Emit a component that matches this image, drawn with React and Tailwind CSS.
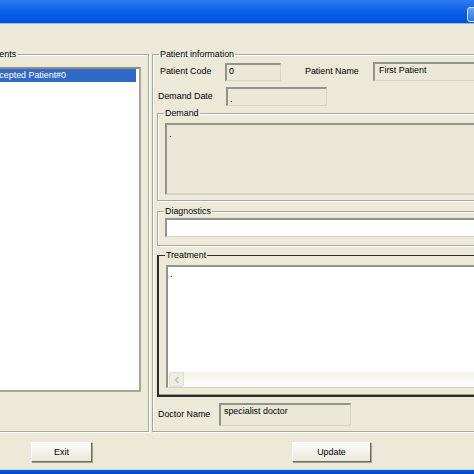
import React from "react";

const sunken = "border-t-2 border-l-2 border-b border-r border-t-[#94938a] border-l-[#94938a] border-b-[#d6d3c2] border-r-[#d6d3c2]";
const etched = "border border-[#aca899] shadow-[inset_1px_1px_0_#ffffff,1px_1px_0_#ffffff]";

function GroupBox({ label, className = "", legendClass = "ml-[6px]", children }) {
  return (
    <fieldset className={`${etched} ${className}`}>
      <legend className={`${legendClass} px-[1px] leading-[11px]`}>{label}</legend>
      {children}
    </fieldset>
  );
}

function Field({ value, className = "", white = false }) {
  return (
    <div className={`${sunken} ${white ? "bg-white" : "bg-[#ebe8d7]"} pl-[2px] pt-[1px] leading-[11px] ${className}`}>
      {value}
    </div>
  );
}

function Button({ children, className = "" }) {
  return (
    <button className={`h-[20px] bg-gradient-to-b from-[#fbfbf8] to-[#ece9dc] border border-t-[#ffffff] border-l-[#ffffff] border-b-[#6f6d62] border-r-[#6f6d62] shadow-[1px_1px_0_#a19f92] leading-[11px] ${className}`}>
      {children}
    </button>
  );
}

export default function App() {
  return (
    <div className="w-[474px] h-[474px] overflow-hidden flex flex-col bg-[#ece9d8] text-black text-[8.9px] font-['Liberation_Sans',Arial,sans-serif]">
      {/* title bar */}
      <div className="h-[24px] shrink-0 flex justify-end items-start bg-gradient-to-b from-[#2c7cf2] via-[#0a5fe8] to-[#0352d9] border-b border-b-[#9fbbe6]">
        <div className="mt-[7px] mr-[-10px] w-[17px] h-[15px] rounded-[3px] border border-[#dce8fb] bg-gradient-to-b from-[#6aa2f7] to-[#2e74e8]" />
      </div>

      {/* body */}
      <div className="flex-1 flex flex-col">
        <div className="mt-[25px] flex items-start">
          <GroupBox label="Patients" legendClass="ml-[4px]" className="ml-[-22px] w-[171px] h-[383px] shrink-0">
            <div className="mt-[7px] ml-[6px] w-[156px] h-[325px] bg-white border-2 border-t-[#8f8e84] border-l-[#8f8e84] border-b-[#a9a79a] border-r-[#a9a79a] pt-[0px]">
              <div className="mr-[3px] h-[13px] bg-[#316ac5] text-white pl-[2px] leading-[13px]">Accepted Patient#0</div>
            </div>
          </GroupBox>

          <GroupBox label="Patient information" className="ml-[3px] w-[340px] h-[383px] shrink-0">
            <div className="mt-[2px] pl-[7px] flex items-center h-[19px]">
              <span className="w-[65px] shrink-0">Patient Code</span>
              <Field value="0" className="w-[56px] h-[18px] shrink-0" />
              <span className="ml-[24px] w-[68px] shrink-0">Patient Name</span>
              <Field value="First Patient" className="w-[130px] h-[19px] shrink-0 pl-[4px]" />
            </div>

            <div className="mt-[6px] pl-[5px] flex items-center h-[19px]">
              <span className="w-[68px] shrink-0">Demand Date</span>
              <Field value={<span className="block pt-[4px]">.</span>} className="w-[101px] h-[19px] shrink-0" />
            </div>

            <GroupBox label="Demand" className="mt-[2px] mx-[4px] h-[93px]">
              <Field value={<span className="block pt-[3px]">.</span>} className="mt-[4px] mx-[7px] h-[72px] border-b-2 border-b-[#94938a]" />
            </GroupBox>

            <GroupBox label="Diagnostics" className="mt-[5px] mx-[4px] h-[40px]">
              <Field white value="" className="mt-[1px] mx-[7px] h-[19px]" />
            </GroupBox>

            <fieldset className="mt-[4px] mx-[4px] h-[147px] border-t border-l-2 border-r border-b-2 border-[#2c2c2c] shadow-[inset_0_-1px_0_#9d9b8f]">
              <legend className="ml-[6px] px-[1px] leading-[11px]">Treatment</legend>
              <div className={`mt-[4px] mx-[7px] h-[123px] flex flex-col bg-white ${sunken}`}>
                <div className="flex-1 pl-[2px] pt-[2px] leading-[11px]">.</div>
                <div className="h-[15px] shrink-0 flex justify-between bg-gradient-to-b from-[#f3f2ec] to-[#fdfdfb]">
                  <div className="w-[15px] h-[15px] ml-[1px] rounded-[2px] bg-[#eeede5] border border-[#e2e0d4] flex items-center justify-center">
                    <svg width="6" height="8" viewBox="0 0 6 8"><path d="M4.5 1 L1.5 4 L4.5 7" fill="none" stroke="#c3c1b4" strokeWidth="1.5" /></svg>
                  </div>
                  <div className="w-[15px] h-[15px] rounded-[2px] bg-[#eeede5] border border-[#e2e0d4] flex items-center justify-center">
                    <svg width="6" height="8" viewBox="0 0 6 8"><path d="M1.5 1 L4.5 4 L1.5 7" fill="none" stroke="#c3c1b4" strokeWidth="1.5" /></svg>
                  </div>
                </div>
              </div>
            </fieldset>

            <div className="mt-[6px] pl-[5px] flex items-center">
              <span className="w-[61px] shrink-0">Doctor Name</span>
              <Field value="specialist doctor" className="w-[132px] h-[23px] shrink-0 pl-[3px]" />
            </div>
          </GroupBox>
        </div>

        <div className="mt-[10px] flex">
          <Button className="ml-[31px] w-[61px]">Exit</Button>
          <Button className="ml-[200px] w-[79px]">Update</Button>
        </div>
      </div>

      {/* bottom frame */}
      <div className="h-[5px] shrink-0 bg-gradient-to-b from-[#0a5ad9] to-[#0448c6] border-t border-t-[#c3d3ee]" />
    </div>
  );
}
